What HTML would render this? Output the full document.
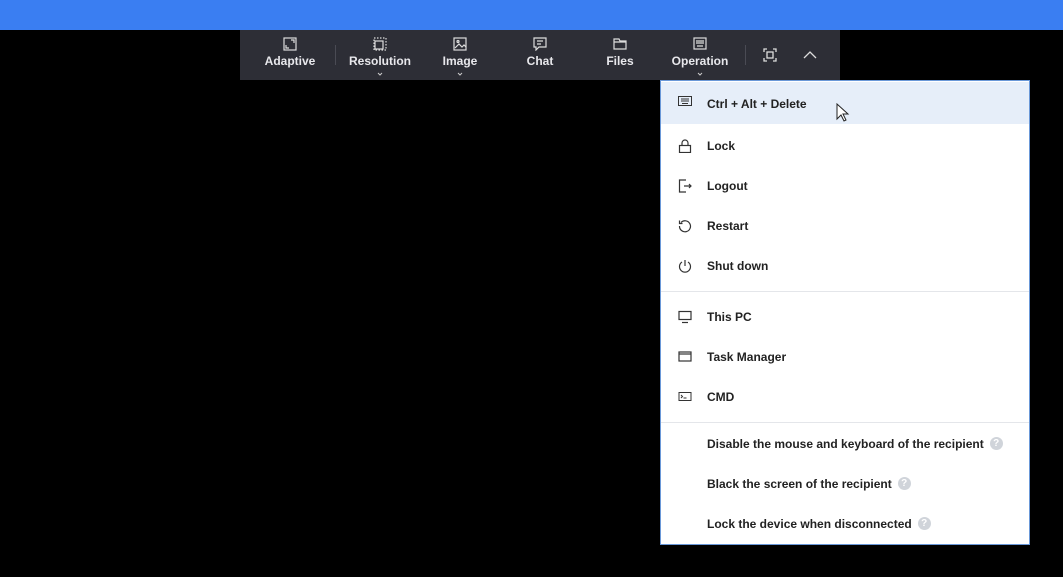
<!DOCTYPE html><html><head><style>
body{margin:0;width:1063px;height:577px;background:#000;position:relative;overflow:hidden;font-family:"Liberation Sans",sans-serif}
.top{position:absolute;left:0;top:0;width:1063px;height:30px;background:#3a7ef2}
.tb{position:absolute;left:240px;top:30px;width:600px;height:50px;background:#2d2e36}
.it{position:absolute;top:0;width:80px;margin-left:-40px;text-align:center;color:#e8e8ec;font-size:12px;font-weight:bold}
.it svg{position:absolute;left:33px;top:7px}
.it .l{position:absolute;top:24px;width:100%}
.it svg.c{left:37px;top:42px}
.sep{position:absolute;top:15px;width:1px;height:20px;background:#4a4b54}
.menu{position:absolute;left:660px;top:80px;width:368px;height:463px;background:#fff;border:1px solid #6a98d8}
.r{position:absolute;left:0;width:368px;height:40px;font-size:12px;font-weight:bold;color:#222}
.r span{position:absolute;left:46px;top:13px}
.r svg{position:absolute;left:17px;top:13px}
.hl{background:#e6eef9}
.d{position:absolute;left:0;width:368px;height:1px;background:#e4e6ea}
.q{display:inline-block;width:13px;height:13px;border-radius:50%;background:#d0d4da;color:#fff;font-size:10px;text-align:center;line-height:13px;margin-left:6px;vertical-align:top;font-style:normal}
</style></head><body>
<div class="top"></div>
<div class="tb">
<div class="it" style="left:50px"><svg width="14" height="14" fill="none" stroke="#ddd" stroke-width="1.2"><rect x="1" y="1" width="12" height="12"/><path d="M3 8v3h3M11 6V3H8"/></svg><div class="l">Adaptive</div></div>
<div class="sep" style="left:95px"></div>
<div class="it" style="left:140px"><svg width="14" height="14" fill="none" stroke="#ddd" stroke-width="1.2"><rect x="1" y="1" width="12" height="12" stroke-dasharray="1.5 1.5"/><rect x="2" y="4" width="8" height="8"/></svg><div class="l">Resolution</div><svg class="c" width="6" height="4" fill="none" stroke="#ccc"><path d="M1 1l2 2 2-2"/></svg></div>
<div class="it" style="left:220px"><svg width="14" height="14" fill="none" stroke="#ddd" stroke-width="1.2"><rect x="1" y="1" width="12" height="12"/><path d="M2 11l4-4 3 3 2-2 2 2"/><circle cx="5" cy="4.5" r="1"/></svg><div class="l">Image</div><svg class="c" width="6" height="4" fill="none" stroke="#ccc"><path d="M1 1l2 2 2-2"/></svg></div>
<div class="it" style="left:300px"><svg width="14" height="14" fill="none" stroke="#ddd" stroke-width="1.2"><path d="M1 1h12v9H6l-3 3v-3H1z"/><path d="M4 4h6M4 7h4"/></svg><div class="l">Chat</div></div>
<div class="it" style="left:380px"><svg width="14" height="14" fill="none" stroke="#ddd" stroke-width="1.2"><path d="M1 2h5l1 2h6v8H1z M1 5h12"/></svg><div class="l">Files</div></div>
<div class="it" style="left:460px"><svg width="14" height="14" fill="none" stroke="#ddd" stroke-width="1.2"><rect x="1" y="1" width="12" height="11"/><path d="M3 4h8M3 6h8M4 9h6"/></svg><div class="l">Operation</div><svg class="c" width="6" height="4" fill="none" stroke="#ccc"><path d="M1 1l2 2 2-2"/></svg></div>
<div class="sep" style="left:505px"></div>
<div class="it" style="left:530px"><svg width="14" height="14" fill="none" stroke="#ddd" stroke-width="1.3" style="top:18px"><path d="M1 4V1h3M10 1h3v3M13 10v3h-3M4 13H1v-3"/><rect x="4" y="4" width="6" height="6"/></svg></div>
<div class="it" style="left:570px"><svg width="14" height="14" fill="none" stroke="#ddd" stroke-width="1.3" style="top:18px"><path d="M1 10l6-6 6 6"/></svg></div>
</div>
<div class="menu">
<div class="r hl" style="top:1px;height:42px"><svg width="14" height="12" fill="none" stroke="#333"><rect x="0.5" y="1.5" width="13" height="9"/><path d="M3 4h8M3 6h8M4 8.5h6"/></svg><span style="top:15px">Ctrl + Alt + Delete</span></div>
<div class="r" style="top:45px"><svg width="14" height="14" fill="none" stroke="#333" stroke-width="1.2"><rect x="1.5" y="6.5" width="11" height="7"/><path d="M4 6.5V4a3 3 0 0 1 6 0v2.5"/></svg><span>Lock</span></div>
<div class="r" style="top:85px"><svg width="14" height="14" fill="none" stroke="#333" stroke-width="1.2"><path d="M8 1H1.5v12H8M6 7h7M11 5l2 2-2 2"/></svg><span>Logout</span></div>
<div class="r" style="top:125px"><svg width="14" height="14" fill="none" stroke="#333" stroke-width="1.2"><path d="M3 3.5A5.5 5.5 0 1 1 1.5 7M1.5 1.5v3h3"/></svg><span>Restart</span></div>
<div class="r" style="top:165px"><svg width="14" height="14" fill="none" stroke="#333" stroke-width="1.2"><path d="M7 1v6M4 3a5.5 5.5 0 1 0 6 0"/></svg><span>Shut down</span></div>
<div class="d" style="top:210px"></div>
<div class="r" style="top:216px"><svg width="14" height="14" fill="none" stroke="#333" stroke-width="1.2"><rect x="1" y="1.5" width="12" height="8"/><path d="M4 12.5h6"/></svg><span>This PC</span></div>
<div class="r" style="top:256px"><svg width="14" height="14" fill="none" stroke="#333" stroke-width="1.2"><rect x="1" y="2" width="12" height="9"/><path d="M1 4h12"/></svg><span>Task Manager</span></div>
<div class="r" style="top:296px"><svg width="14" height="14" fill="none" stroke="#333" stroke-width="1"><rect x="1" y="2.5" width="12" height="8"/><path d="M3 5l1.5 1.5L3 8M5.5 8h3"/></svg><span>CMD</span></div>
<div class="d" style="top:341px"></div>
<div class="r" style="top:343px"><span>Disable the mouse and keyboard of the recipient<i class="q">?</i></span></div>
<div class="r" style="top:383px"><span>Black the screen of the recipient<i class="q">?</i></span></div>
<div class="r" style="top:423px"><span>Lock the device when disconnected<i class="q">?</i></span></div>
</div>
<svg style="position:absolute;left:836px;top:103px" width="14" height="20"><path d="M1 1v15l4-4 3 6 2-1-3-6h5z" fill="#fff" stroke="#222"/></svg>
</body></html>
